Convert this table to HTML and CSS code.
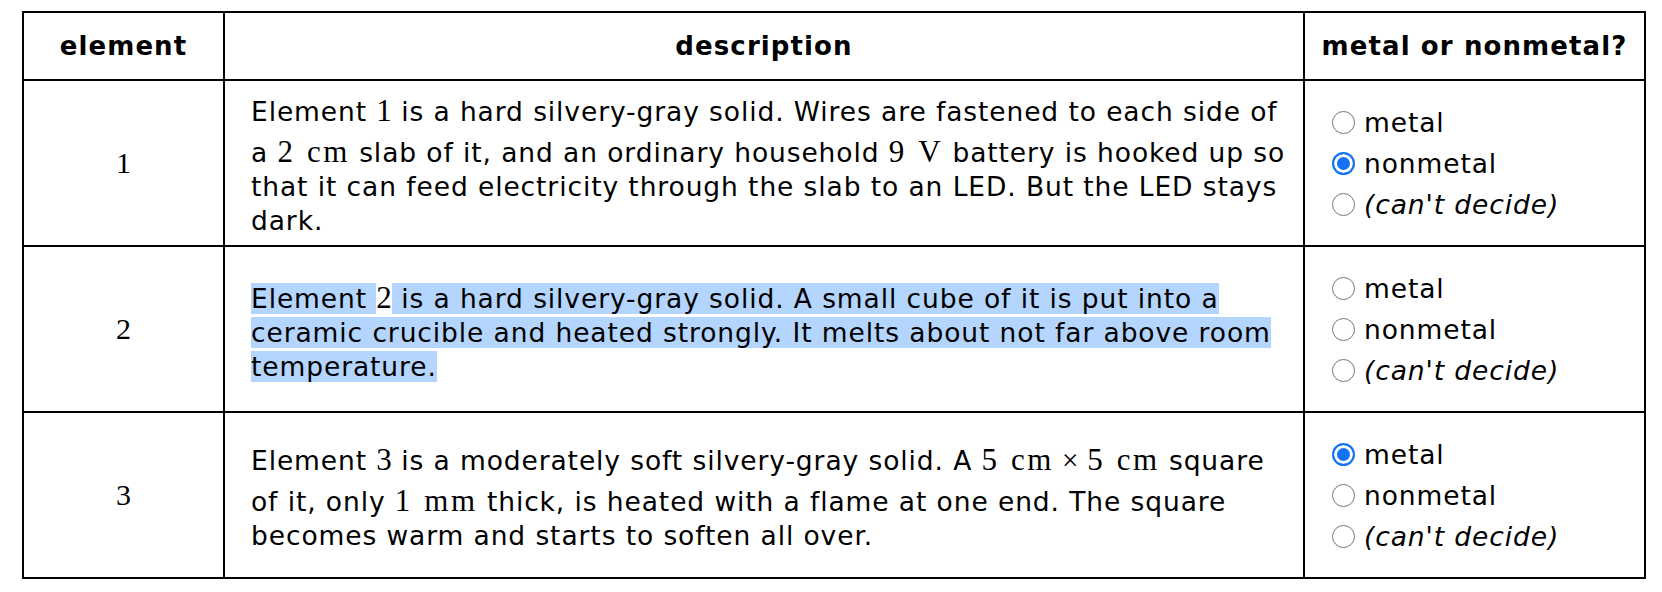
FILE: index.html
```html
<!DOCTYPE html>
<html>
<head>
<meta charset="utf-8">
<link rel="stylesheet" href="styles.css">
</head>
<body>
<table class="quiz">
  <colgroup>
    <col class="c-el">
    <col class="c-desc">
    <col class="c-ans">
  </colgroup>
  <thead>
    <tr>
      <th>element</th>
      <th>description</th>
      <th>metal or nonmetal?</th>
    </tr>
  </thead>
  <tbody>
    <tr>
      <td class="num"><span class="mnum">1</span></td>
      <td class="desc">Element <span class="m">1</span> is a hard silvery-gray solid. Wires are fastened to each side of a <span class="m">2<span class="gap"></span><span class="u">cm</span></span> slab of it, and an ordinary household <span class="m">9<span class="gap"></span><span class="u">V</span></span> battery is hooked up so that it can feed electricity through the slab to an LED. But the LED stays dark.</td>
      <td class="ans">
        <label class="opt"><input type="radio" name="q1"> metal</label>
        <label class="opt"><input type="radio" name="q1" checked> nonmetal</label>
        <label class="opt"><input type="radio" name="q1"> <i>(can't decide)</i></label>
      </td>
    </tr>
    <tr>
      <td class="num"><span class="mnum">2</span></td>
      <td class="desc"><span class="sel">Element </span><span class="m mw">2</span><span class="sel"> is a hard silvery-gray solid. A small cube of it is put into a ceramic crucible and heated strongly. It melts about not far above room temperature.</span></td>
      <td class="ans">
        <label class="opt"><input type="radio" name="q2"> metal</label>
        <label class="opt"><input type="radio" name="q2"> nonmetal</label>
        <label class="opt"><input type="radio" name="q2"> <i>(can't decide)</i></label>
      </td>
    </tr>
    <tr>
      <td class="num"><span class="mnum">3</span></td>
      <td class="desc">Element <span class="m">3</span> is a moderately soft silvery-gray solid. A <span class="m">5<span class="gap"></span><span class="u">cm</span><span class="times">×</span>5<span class="gap"></span><span class="u">cm</span></span> square of it, only <span class="m">1<span class="gap"></span><span class="u">mm</span></span> thick, is heated with a flame at one end. The square becomes warm and starts to soften all over.</td>
      <td class="ans">
        <label class="opt"><input type="radio" name="q3" checked> metal</label>
        <label class="opt"><input type="radio" name="q3"> nonmetal</label>
        <label class="opt"><input type="radio" name="q3"> <i>(can't decide)</i></label>
      </td>
    </tr>
  </tbody>
</table>
</body>
</html>
```

FILE: styles.css
```css
html, body {
  margin: 0;
  padding: 0;
  background: #fff;
}
body {
  padding: 11px 0 0 22px;
  font-family: "DejaVu Sans", Verdana, sans-serif;
  font-size: 26.5px;
  letter-spacing: 0.9px;
  color: #000;
}
.quiz {
  border-collapse: collapse;
  width: 1622px;
  table-layout: fixed;
}
.c-el { width: 201px; }
.c-desc { width: 1080px; }
.c-ans { width: 341px; }
.quiz th, .quiz td {
  border: 2px solid #000;
  vertical-align: middle;
}
.quiz th {
  height: 66px;
  padding: 0;
  font-size: 26px;
  font-weight: bold;
  letter-spacing: 1.1px;
  text-align: center;
  line-height: 34px;
}
.quiz td {
  height: 164px;
  padding: 0;
}
.num {
  text-align: center;
}
.mnum {
  font-family: "Liberation Serif", "Times New Roman", serif;
  font-size: 30px;
  letter-spacing: 0;
}
.desc {
  padding: 0 8px 0 26px !important;
  line-height: 34px;
}
.m {
  font-family: "Liberation Serif", "Times New Roman", serif;
  font-size: 31px;
  letter-spacing: 0;
  display: inline-block;
  line-height: 1;
  padding-top: 7px;
}
.u {
  letter-spacing: 2.5px;
}
.gap {
  display: inline-block;
  width: 14px;
}
.times {
  font-size: 29px;
  margin: 0 9px 0 8px;
}
.sel {
  background: #b4d5fe;
}
.mw {
  background: #fff;
}
.ans {
  padding: 0 0 0 27px !important;
}
.opt {
  display: flex;
  align-items: center;
  height: 41px;
  line-height: 41px;
}
.opt input {
  -webkit-appearance: none;
  appearance: none;
  width: 23px;
  height: 23px;
  margin: 0 9px 0 0;
  border: 1.5px solid #767676;
  border-radius: 50%;
  background: #fff;
  box-sizing: border-box;
  flex: none;
}
.opt input:checked {
  border: 2px solid #1473f2;
  background: #1473f2;
  box-shadow: inset 0 0 0 3px #fff;
}
```
